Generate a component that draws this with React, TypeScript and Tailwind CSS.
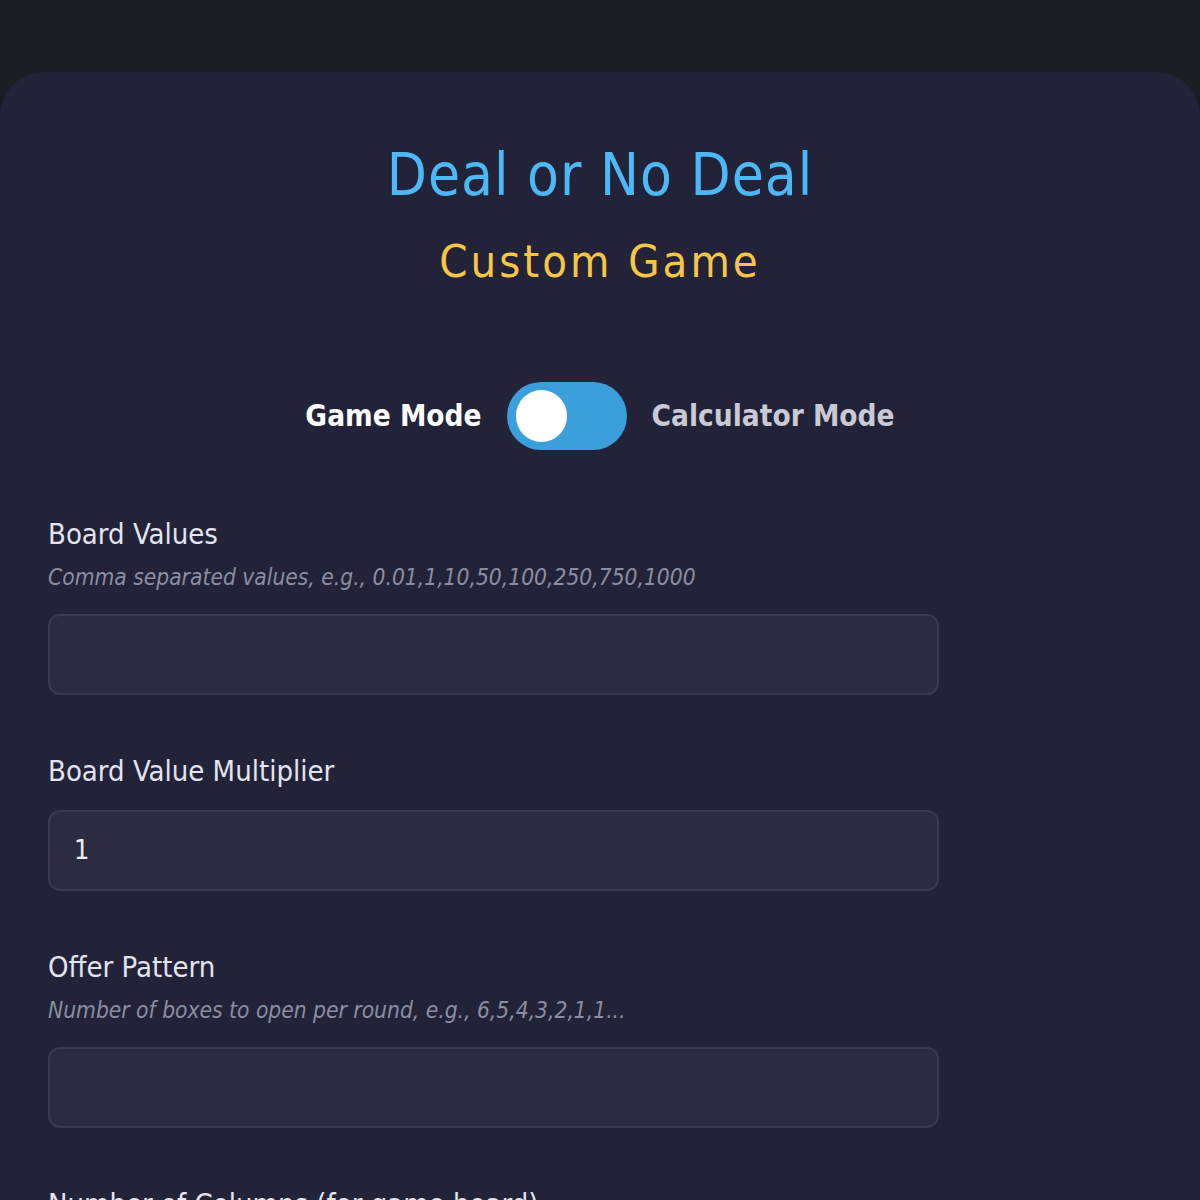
import React from "react";

const font = { fontFamily: '"DejaVu Sans Condensed", "DejaVu Sans", sans-serif' };

function Field({ label, hint, value }: { label: string; hint?: string; value?: string }) {
  return (
    <div className="flex flex-col">
      <label className="text-[29px] leading-[36px] text-[#e3e4ef]">{label}</label>
      {hint ? (
        <p className="mt-[10px] text-[22.6px] leading-[30px] italic text-[#8b8ea3]">{hint}</p>
      ) : null}
      <div
        className={`${hint ? "mt-[22px]" : "mt-[21px]"} h-[81px] w-[891px] rounded-[12px] border-2 border-[#393a52] bg-[#2c2b3f] flex items-center px-[24px] text-[27px] text-[#eceef6]`}
      >
        {value}
      </div>
    </div>
  );
}

export default function App() {
  return (
    <div className="h-[1200px] bg-[#1c1d23] pt-[72px] overflow-hidden" style={font}>
      <div className="rounded-t-[44px] bg-[#222339] min-h-[1128px] px-[48px]">
        <div className="flex flex-col items-center pt-[68px]">
          <h1 className="text-[58px] leading-[70px] tracking-[1px] text-[#4cb8f6]">Deal or No Deal</h1>
          <h2 className="mt-[24px] text-[45px] leading-[56px] tracking-[3px] text-[#f8c544]">Custom Game</h2>
        </div>

        <div className="mt-[92px] flex items-center justify-center gap-[25px]">
          <span className="text-[29.5px] font-bold text-white">Game Mode</span>
          <div className="w-[120px] h-[68px] rounded-full bg-[#3b9fdc] flex items-center pl-[9px]">
            <div className="w-[51px] h-[52px] rounded-full bg-white" />
          </div>
          <span className="text-[29.5px] font-bold text-[#c9cad3]">Calculator Mode</span>
        </div>

        <div className="mt-[66px] flex flex-col gap-[58px]">
          <Field label="Board Values" hint="Comma separated values, e.g., 0.01,1,10,50,100,250,750,1000" />
          <Field label="Board Value Multiplier" value="1" />
          <Field label="Offer Pattern" hint="Number of boxes to open per round, e.g., 6,5,4,3,2,1,1..." />
          <Field label="Number of Columns (for game board)" />
        </div>
      </div>
    </div>
  );
}
